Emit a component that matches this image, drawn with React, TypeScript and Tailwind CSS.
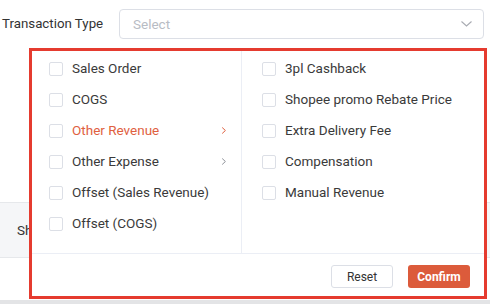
import React from "react";

const leftItems = [
  { label: "Sales Order" },
  { label: "COGS" },
  { label: "Other Revenue", arrow: true, active: true },
  { label: "Other Expense", arrow: true },
  { label: "Offset (Sales Revenue)" },
  { label: "Offset (COGS)" },
];

const rightItems = [
  "3pl Cashback",
  "Shopee promo Rebate Price",
  "Extra Delivery Fee",
  "Compensation",
  "Manual Revenue",
];

function Box() {
  return <span className="block w-[14px] h-[14px] shrink-0 rounded-[2px] border border-[#dcdfe6] bg-white" />;
}

function Arrow({ color }: { color: string }) {
  return (
    <svg width="6" height="9" viewBox="0 0 6 9" fill="none">
      <path d="M1.2 1.5l3.2 3L1.2 7.5" stroke={color} strokeWidth="1" />
    </svg>
  );
}

export default function App() {
  return (
    <div
      className="relative w-[490px] h-[304px] overflow-hidden bg-white text-[#333]"
      style={{ fontFamily: "Roboto, 'Liberation Sans', sans-serif" }}
    >
      <div className="flex items-center pt-[9px]">
        <div className="w-[119px] pl-[2px] text-[13.3px] text-[#333]">Transaction Type</div>
        <div className="flex h-[30px] w-[365px] items-center justify-between rounded-[4px] border border-[#dcdfe6] pl-[13px] pr-[11px]">
          <span className="text-[13.5px] text-[#b8bcc4]">Select</span>
          <svg width="11" height="6" viewBox="0 0 11 6" fill="none">
            <path d="M0.5 0.5l5 4.5 5-4.5" stroke="#a8abb2" strokeWidth="1.1" />
          </svg>
        </div>
      </div>

      <div className="mt-[163px] flex h-[56px] items-center border-y border-[#e6e8eb] bg-[#f5f6f8] pl-[17px] text-[13.5px] text-[#333]">
        Shop
      </div>
      <div className="absolute bottom-0 left-0 h-[4px] w-full bg-[#e3e4e6]" />

      <div className="absolute left-[29px] top-[48px] flex h-[251px] w-[458px] flex-col border-[3px] border-[#e53b2f] bg-white">
        <div className="flex h-[203px] border-b border-[#ebeef5]">
          <div className="w-[210px] border-r border-[#ebeef5] pl-[17px] pr-[14px] pt-[2px]">
            {leftItems.map((it) => (
              <div key={it.label} className="flex h-[31px] items-center">
                <Box />
                <span
                  className={
                    "ml-[9px] flex-1 text-[13.5px] " + (it.active ? "text-[#e0613f]" : "text-[#3a3a3a]")
                  }
                >
                  {it.label}
                </span>
                {it.arrow && <Arrow color={it.active ? "#e0613f" : "#909399"} />}
              </div>
            ))}
          </div>
          <div className="flex-1 pl-[20px] pt-[2px]">
            {rightItems.map((t) => (
              <div key={t} className="flex h-[31px] items-center">
                <Box />
                <span className="ml-[9px] text-[13.5px] text-[#3a3a3a]">{t}</span>
              </div>
            ))}
          </div>
        </div>
        <div className="flex flex-1 items-center justify-end gap-[15px] pr-[14px] pt-[3px]">
          <button className="h-[23px] w-[62px] rounded-[3px] border border-[#dcdfe6] bg-white text-[12px] text-[#333]">
            Reset
          </button>
          <button className="h-[23px] w-[62px] rounded-[3px] bg-[#dc5b3b] text-[12px] font-bold text-white">
            Confirm
          </button>
        </div>
      </div>
    </div>
  );
}
